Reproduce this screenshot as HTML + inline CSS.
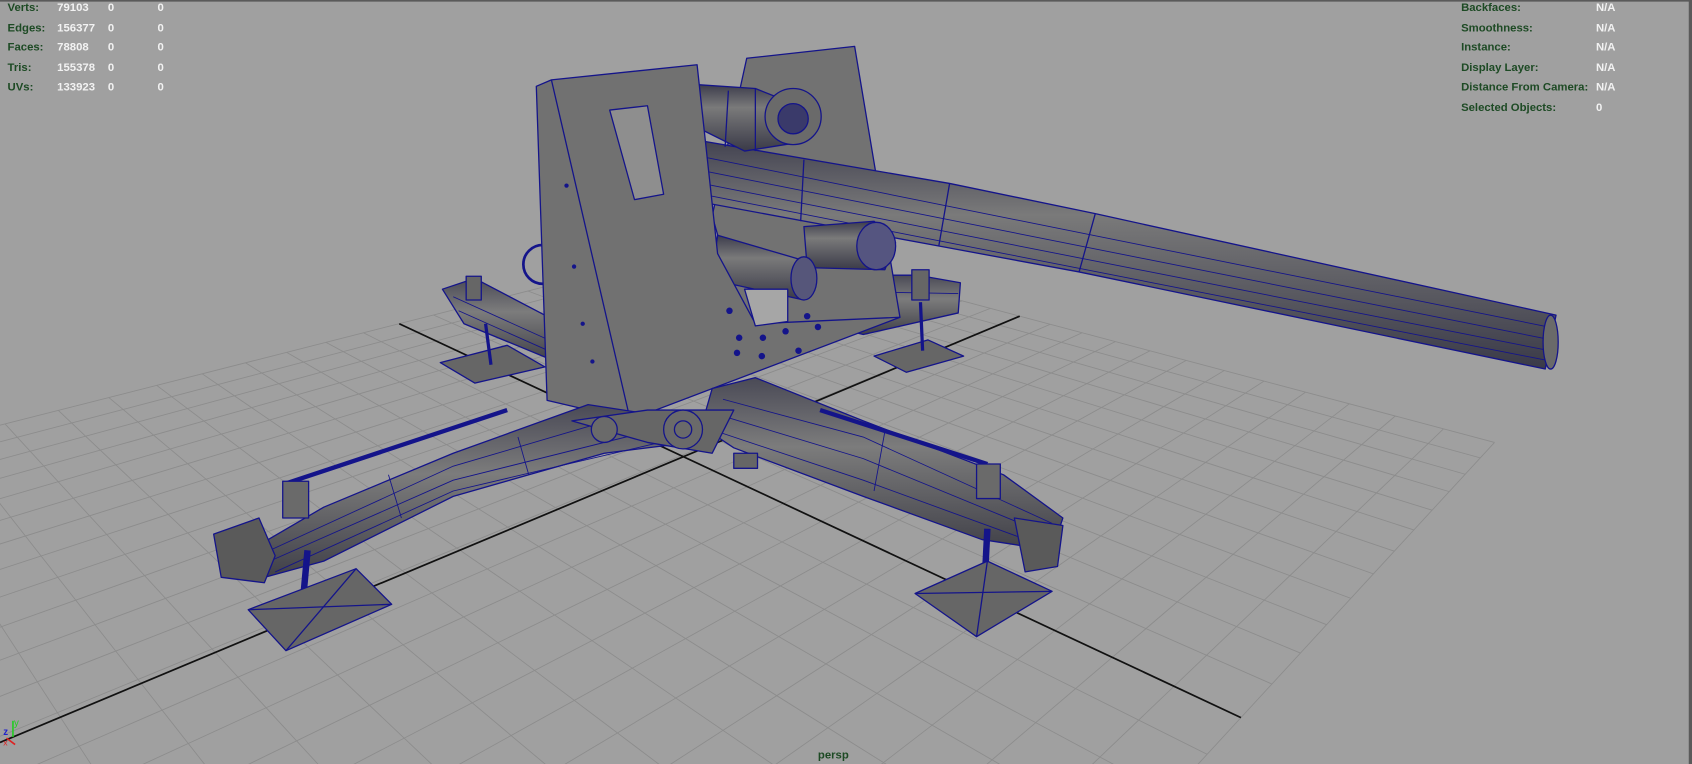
<!DOCTYPE html>
<html><head><meta charset="utf-8"><style>
html,body{margin:0;padding:0;background:#a0a0a0;overflow:hidden;width:1692px;height:764px}
svg{display:block}
.l{font:bold 10.5px "Liberation Sans",Arial,sans-serif;fill:#1d4a24}
.v{font:bold 10.5px "Liberation Sans",Arial,sans-serif;fill:#f2f2f2}
</style></head><body>
<svg id="s" width="1692" height="764" viewBox="0 0 1568 708" preserveAspectRatio="none" xmlns="http://www.w3.org/2000/svg">
<defs>
<linearGradient id="bar" x1="0" y1="0" x2="0" y2="1"><stop offset="0" stop-color="#3c3c4c"/><stop offset="0.35" stop-color="#7a7a7a"/><stop offset="1" stop-color="#3a3a48"/></linearGradient>
<linearGradient id="leg" x1="0" y1="0" x2="0" y2="1"><stop offset="0" stop-color="#4a4a56"/><stop offset="0.4" stop-color="#7c7c7c"/><stop offset="1" stop-color="#404048"/></linearGradient>
</defs>
<rect width="1568" height="708" fill="#a0a0a0"/>
<rect width="1568" height="1.5" fill="#5a5a5a"/>
<rect x="1565" y="0" width="3" height="708" fill="#5a5a5a"/>
<g id="grid" stroke="#8c8c8c" stroke-width="0.8" fill="none"></g>
<line x1="370" y1="300" x2="1150" y2="665" stroke="#111" stroke-width="1.6"/>
<line x1="945" y1="293" x2="0" y2="688" stroke="#111" stroke-width="1.6"/>

<g stroke="#14148a" stroke-width="1.2" stroke-linejoin="round">
<!-- back left leg -->
<polygon points="410,268 440,258 520,300 515,335 430,300" fill="url(#leg)"/>
<line x1="420" y1="275" x2="515" y2="318" stroke-width="0.8"/>
<line x1="425" y1="288" x2="515" y2="328" stroke-width="0.8"/>
<polygon points="408,336 470,320 505,340 440,355" fill="#666"/>
<line x1="450" y1="300" x2="455" y2="338" stroke-width="3"/>
<rect x="432" y="256" width="14" height="22" fill="#666"/>
<!-- back right leg -->
<polygon points="760,255 850,255 890,262 888,290 800,310 760,300" fill="url(#leg)"/>
<line x1="770" y1="270" x2="888" y2="272" stroke-width="0.8"/>
<polygon points="810,330 860,315 893,330 840,345" fill="#666"/>
<line x1="853" y1="280" x2="855" y2="325" stroke-width="3"/>
<rect x="845" y="250" width="16" height="28" fill="#666"/>
<!-- back wheel -->
<circle cx="503" cy="245" r="18" fill="none" stroke-width="2.5"/>
<!-- right shield plate -->
<polygon points="692,54 792,43 834,294 700,340 660,200" fill="#727272"/>
<!-- barrel -->
<polygon points="600,122 880,170 1015,198 1442,292 1432,342 1000,252 870,228 600,178" fill="url(#bar)"/>
<g stroke-width="0.8">
<line x1="600" y1="135" x2="1440" y2="304"/><line x1="600" y1="148" x2="1438" y2="315"/><line x1="600" y1="160" x2="1436" y2="325"/><line x1="600" y1="170" x2="1434" y2="334"/>
</g>
<line x1="745" y1="148" x2="742" y2="205"/><line x1="880" y1="170" x2="870" y2="228"/><line x1="1015" y1="198" x2="1000" y2="252"/>
<ellipse cx="1437" cy="317" rx="7" ry="25" fill="#6a6a6a"/>
<!-- recoil cylinder top -->
<polygon points="640,78 700,82 745,100 740,132 690,140 650,120" fill="url(#bar)"/>
<circle cx="735" cy="108" r="26" fill="#6a6a6a"/>
<circle cx="735" cy="110" r="14" fill="#3a3a6a"/>
<line x1="675" y1="84" x2="672" y2="136"/><line x1="700" y1="82" x2="700" y2="140"/>
<!-- lower cylinders -->
<polygon points="745,210 810,205 830,225 820,250 748,248" fill="url(#bar)"/>
<ellipse cx="812" cy="228" rx="18" ry="22" fill="#555580"/>
<polygon points="665,218 740,240 755,265 745,278 672,262 662,240" fill="url(#bar)"/>
<ellipse cx="745" cy="258" rx="12" ry="20" fill="#56567a"/>
<!-- front shield plate -->
<polygon points="497,80 511,74 646,60 665,235 700,300 834,294 584,389 507,371" fill="#717171"/>
<line x1="511" y1="74" x2="584" y2="389"/>
<polygon points="565,102 600,98 615,180 588,185" fill="#8e8e8e"/>
<polygon points="690,268 730,268 730,298 700,302" fill="#a6a6a6"/>
<g fill="#14148a" stroke="none">
<circle cx="676" cy="288" r="3"/><circle cx="685" cy="313" r="3"/><circle cx="707" cy="313" r="3"/><circle cx="728" cy="307" r="3"/><circle cx="748" cy="293" r="3"/><circle cx="740" cy="325" r="3"/><circle cx="706" cy="330" r="3"/><circle cx="683" cy="327" r="3"/><circle cx="758" cy="303" r="3"/>
<circle cx="525" cy="172" r="2"/><circle cx="532" cy="247" r="2"/><circle cx="540" cy="300" r="2"/><circle cx="549" cy="335" r="2"/>
</g>
<!-- front left leg -->
<polygon points="545,375 610,385 640,410 560,420 420,460 300,520 245,535 240,505 300,470 420,420" fill="url(#leg)"/>
<g stroke-width="0.8" fill="none">
<path d="M250,510 L420,432 L580,385"/><path d="M250,520 L420,445 L600,400"/><path d="M255,530 L420,455 L620,408"/>
<line x1="360" y1="440" x2="372" y2="480"/><line x1="480" y1="405" x2="490" y2="440"/>
</g>
<line x1="265" y1="448" x2="470" y2="380" stroke-width="4"/>
<polygon points="198,495 240,480 255,515 245,540 205,535" fill="#5a5a5a"/>
<rect x="262" y="446" width="24" height="34" fill="#6a6a6a"/>
<line x1="285" y1="510" x2="280" y2="565" stroke-width="6"/>
<polygon points="230,565 330,527 363,560 265,603" fill="#666"/>
<line x1="230" y1="565" x2="363" y2="560"/><line x1="330" y1="527" x2="265" y2="603"/>
<!-- front right leg -->
<polygon points="660,360 700,350 800,390 930,440 985,480 975,510 910,500 800,460 680,415 650,395" fill="url(#leg)"/>
<g stroke-width="0.8" fill="none">
<path d="M670,370 L800,405 L975,485"/><path d="M668,385 L800,425 L975,497"/><path d="M665,400 L800,445 L970,507"/>
<line x1="820" y1="400" x2="810" y2="455"/>
</g>
<line x1="760" y1="380" x2="915" y2="430" stroke-width="4"/>
<polygon points="940,480 985,487 980,525 950,530" fill="#5a5a5a"/>
<rect x="905" y="430" width="22" height="32" fill="#6a6a6a"/>
<line x1="915" y1="490" x2="912" y2="550" stroke-width="6"/>
<polygon points="848,550 915,520 975,548 905,590" fill="#666"/>
<line x1="848" y1="550" x2="975" y2="548"/><line x1="915" y1="520" x2="905" y2="590"/>
<!-- center wheels -->
<polygon points="530,390 600,380 680,380 660,420 600,410" fill="#666"/>
<circle cx="560" cy="398" r="12" fill="#6a6a6a"/>
<circle cx="633" cy="398" r="18" fill="#6a6a6a"/><circle cx="633" cy="398" r="8" fill="none"/>
<rect x="680" y="420" width="22" height="14" fill="#666"/>
</g>

<!-- HUD -->
<g class="l"><text x="7" y="10">Verts:</text><text x="7" y="29">Edges:</text><text x="7" y="47">Faces:</text><text x="7" y="66">Tris:</text><text x="7" y="84">UVs:</text></g>
<g class="v"><text x="53" y="10">79103</text><text x="53" y="29">156377</text><text x="53" y="47">78808</text><text x="53" y="66">155378</text><text x="53" y="84">133923</text>
<text x="100" y="10">0</text><text x="100" y="29">0</text><text x="100" y="47">0</text><text x="100" y="66">0</text><text x="100" y="84">0</text>
<text x="146" y="10">0</text><text x="146" y="29">0</text><text x="146" y="47">0</text><text x="146" y="66">0</text><text x="146" y="84">0</text></g>
<g class="l"><text x="1354" y="10">Backfaces:</text><text x="1354" y="29">Smoothness:</text><text x="1354" y="47">Instance:</text><text x="1354" y="66">Display Layer:</text><text x="1354" y="84">Distance From Camera:</text><text x="1354" y="103">Selected Objects:</text></g>
<g class="v"><text x="1479" y="10">N/A</text><text x="1479" y="29">N/A</text><text x="1479" y="47">N/A</text><text x="1479" y="66">N/A</text><text x="1479" y="84">N/A</text><text x="1479" y="103">0</text></g>
<text x="758" y="703" class="l">persp</text>
<!-- axis gizmo -->
<line x1="12" y1="683" x2="12" y2="668" stroke="#2c2" stroke-width="1.5"/>
<text x="13" y="673" font-size="9" fill="#2c2" font-family="Liberation Sans">y</text>
<text x="3" y="681" font-size="9" fill="#22c" font-weight="bold" font-family="Liberation Sans">z</text>
<line x1="6" y1="684" x2="14" y2="690" stroke="#d22" stroke-width="1.5"/>
<text x="3" y="691" font-size="8" fill="#d22" font-family="Liberation Sans">x</text>
</svg>
<script>
(function(){
function solve(src,dst){var A=[],b=[];for(var i=0;i<4;i++){var x=src[i][0],y=src[i][1],X=dst[i][0],Y=dst[i][1];
A.push([x,y,1,0,0,0,-X*x,-X*y]);b.push(X);A.push([0,0,0,x,y,1,-Y*x,-Y*y]);b.push(Y);}
for(var c=0;c<8;c++){var p=c;for(var r=c+1;r<8;r++)if(Math.abs(A[r][c])>Math.abs(A[p][c]))p=r;
var t=A[c];A[c]=A[p];A[p]=t;t=b[c];b[c]=b[p];b[p]=t;
for(var r=0;r<8;r++){if(r==c)continue;var f=A[r][c]/A[c][c];for(var k=c;k<8;k++)A[r][k]-=f*A[c][k];b[r]-=f*b[c];}}
return b.map(function(v,i){return v/A[i][i];});}
var h=solve([[-12,0],[12,0],[0,12],[12,12]],[[370,300],[1150,665],[945,293],[1385,410]]);
function P(u,v){var w=h[6]*u+h[7]*v+1;return [(h[0]*u+h[1]*v+h[2])/w,(h[3]*u+h[4]*v+h[5])/w];}
var g=document.getElementById('grid'),d='';
for(var i=-12;i<=12;i++){var a=P(i,-12),b=P(i,12),c=P(-12,i),e=P(12,i);
d+='M'+a[0].toFixed(1)+' '+a[1].toFixed(1)+'L'+b[0].toFixed(1)+' '+b[1].toFixed(1);
d+='M'+c[0].toFixed(1)+' '+c[1].toFixed(1)+'L'+e[0].toFixed(1)+' '+e[1].toFixed(1);}
var p=document.createElementNS('http://www.w3.org/2000/svg','path');p.setAttribute('d',d);g.appendChild(p);
})();
</script>
</body></html>
